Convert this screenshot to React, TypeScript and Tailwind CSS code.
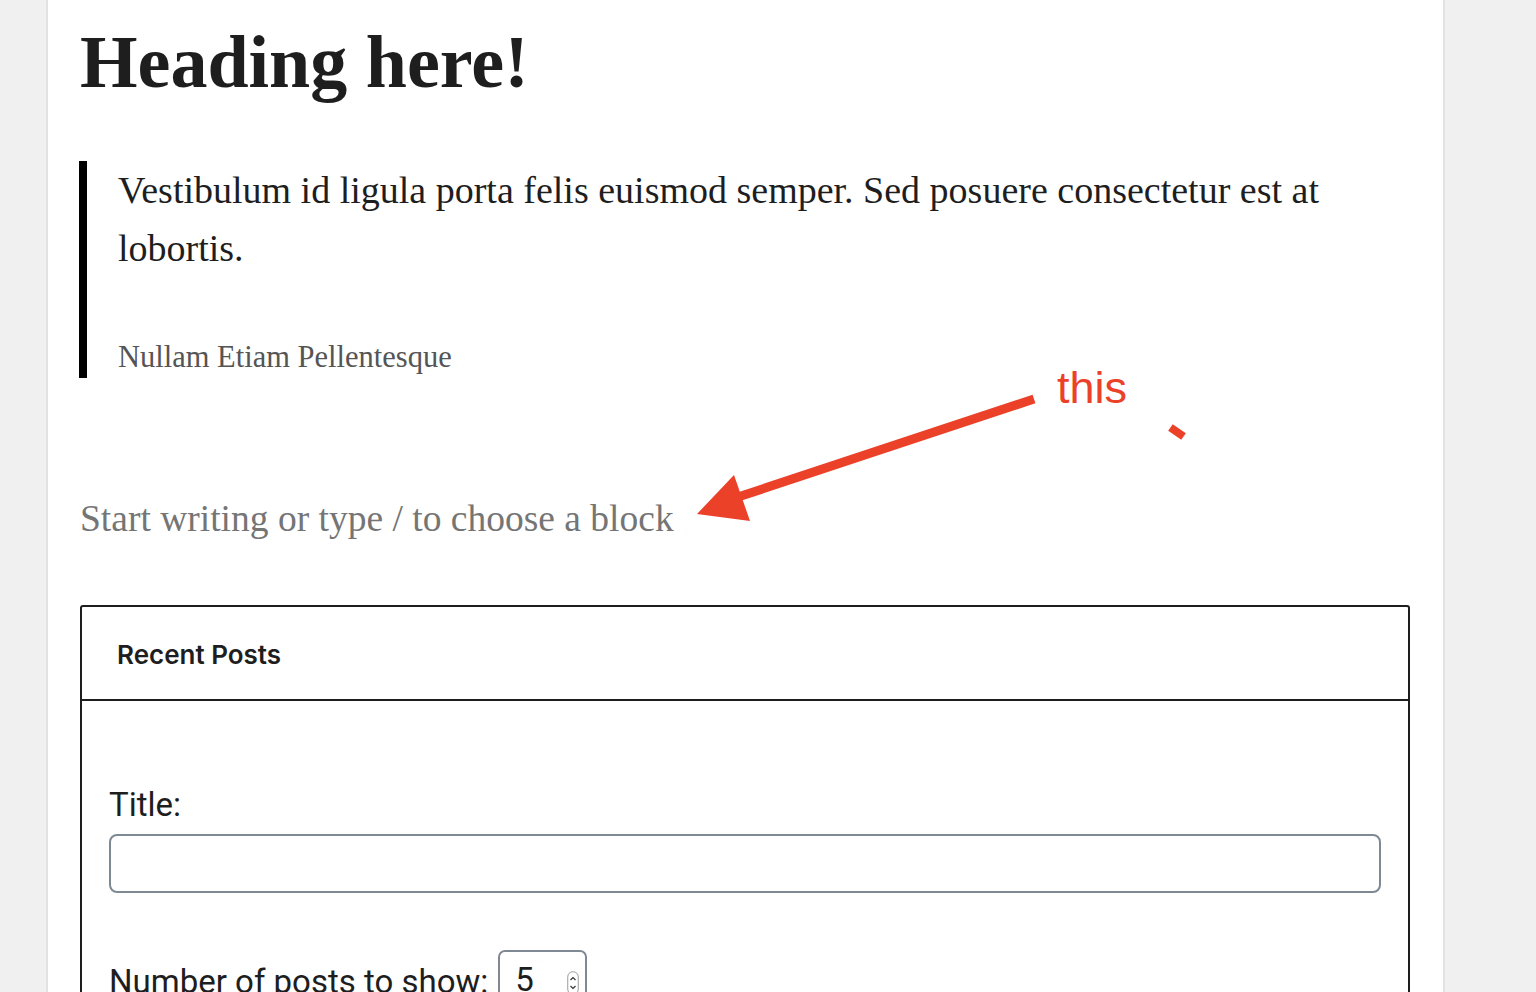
import React from "react";

const serif = { fontFamily: '"Liberation Serif", "Times New Roman", serif' };

export default function App() {
  return (
    <div className="relative h-[992px] w-full overflow-hidden bg-[#f0f0f0]">
      <div className="ml-[46px] h-full w-[1399px] border-x-2 border-[#e2e2e2] bg-white pl-[32px] pr-[33px] pt-[25px]">
        <h1
          className="text-[74px] font-bold leading-[74px] text-[#1e1e1e]"
          style={serif}
        >
          Heading here!
        </h1>

        <blockquote className="ml-[-1px] mt-[62px] border-l-[8px] border-black pl-[31px] pb-[3px]" style={serif}>
          <p className="text-[38px] leading-[58px] text-[#1e1e1e]">
            Vestibulum id ligula porta felis euismod semper. Sed posuere consectetur est at lobortis.
          </p>
          <cite className="mt-[62px] block text-[30.5px] not-italic leading-[36px] text-[#555555]">
            Nullam Etiam Pellentesque
          </cite>
        </blockquote>

        <p className="mt-[112px] text-[37.5px] leading-[58px] text-[#757575]" style={serif}>
          Start writing or type / to choose a block
        </p>

        <div
          className="mt-[57px] rounded-[3px] border-2 border-[#1e1e1e]"
          style={{ fontFamily: 'Roboto, "Noto Sans", sans-serif' }}
        >
          <div className="flex h-[94px] items-center border-b-2 border-[#1e1e1e] pl-[35px] pt-[2px]">
            <span
              className="text-[26px] font-semibold text-[#1e1e1e]"
              style={{ fontFamily: 'Inter, "Noto Sans", sans-serif' }}
            >
              Recent Posts
            </span>
          </div>
          <div className="px-[27px] pt-[84px] pb-[40px]">
            <div className="text-[33px] leading-[40px] text-[#1e1e1e]">Title:</div>
            <div className="mt-[9px] h-[59px] w-full rounded-[8px] border-2 border-[#7e8993] bg-white" />
            <div className="mt-[57px] flex items-start gap-[10px]">
              <span className="pt-[12px] text-[33px] leading-[40px] text-[#1e1e1e]">
                Number of posts to show:
              </span>
              <div className="flex h-[59px] w-[89px] items-center justify-between rounded-[7px] border-2 border-[#7e8993] pl-[15px] pr-[6px]">
                <span className="text-[33px] leading-[40px] text-[#1e1e1e]">5</span>
                <svg width="12" height="24" viewBox="0 0 12 24" className="mt-[6px]">
                  <rect x="0.75" y="0.75" width="10.5" height="22.5" rx="5" fill="none" stroke="#9a9a9a" strokeWidth="1" />
                  <path d="M3.5 9 L6 6.5 L8.5 9" fill="none" stroke="#333" strokeWidth="1.2" />
                  <path d="M3.5 15 L6 17.5 L8.5 15" fill="none" stroke="#333" strokeWidth="1.2" />
                </svg>
              </div>
            </div>
          </div>
        </div>
      </div>

      {/* annotation overlay */}
      <svg
        className="pointer-events-none absolute left-0 top-0"
        width="1536"
        height="992"
        viewBox="0 0 1536 992"
      >
        <line x1="1034" y1="399" x2="738" y2="497" stroke="#ec4129" strokeWidth="9" />
        <polygon points="697,514 734,475 750,521" fill="#ec4129" />
        <rect x="1169" y="428" width="16" height="8" fill="#ec4129" transform="rotate(35 1177 432)" />
      </svg>
      <span
        className="absolute left-[1057px] top-[362px] text-[45px] leading-[52px] text-[#ec4129]"
        style={{ fontFamily: '"Liberation Sans", Arial, sans-serif' }}
      >
        this
      </span>
    </div>
  );
}
